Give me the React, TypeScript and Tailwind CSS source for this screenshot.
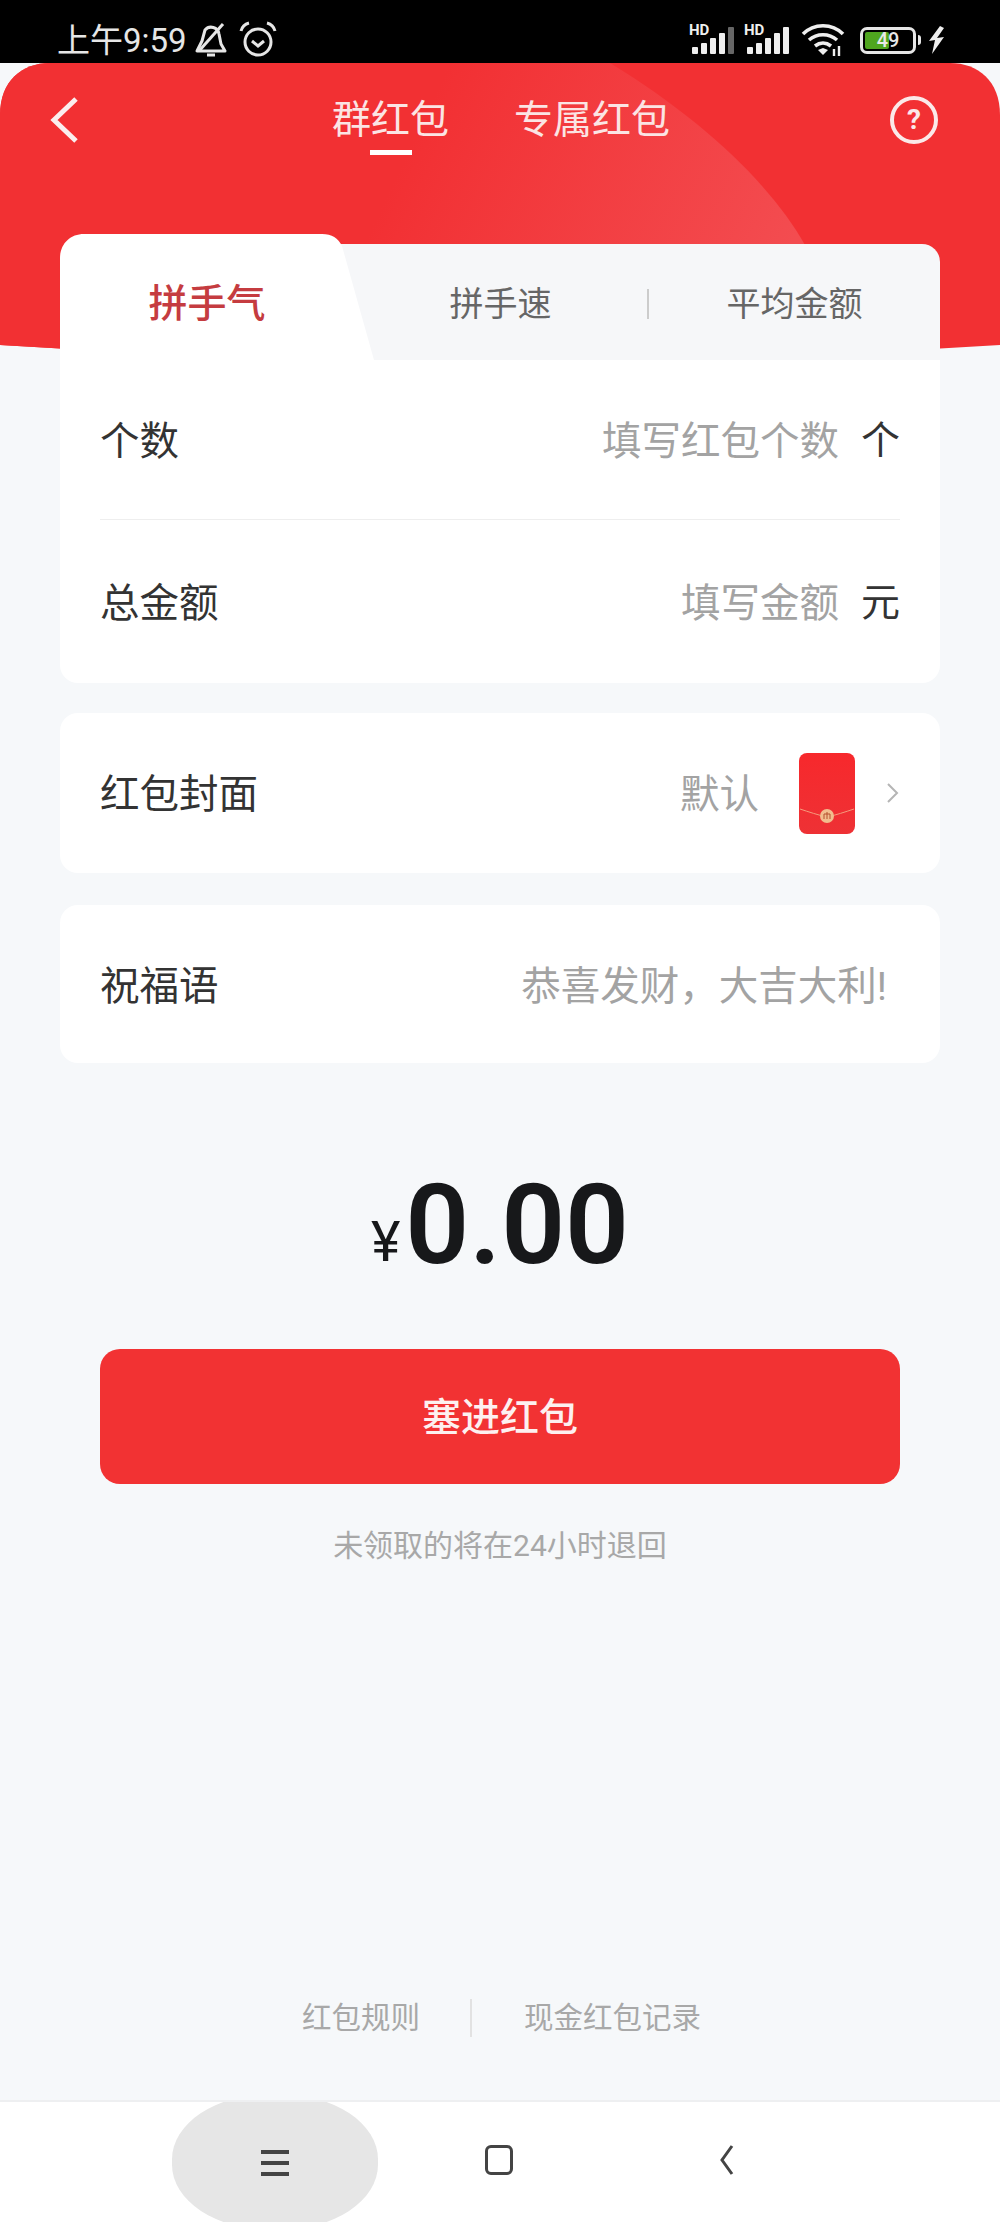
/**
 * Red packet send page
 */
const cjk = "font-['Roboto','Noto_Sans_CJK_SC',sans-serif]";

function SignalIcon({ dimLast }: { dimLast?: boolean }) {
    const bars = [
        { x: 3, h: 7 },
        { x: 12, h: 11 },
        { x: 21, h: 16 },
        { x: 30, h: 21 },
        { x: 39, h: 27 },
    ];

    return (
        <div className="relative h-[28px] w-[46px]">
            <span className="absolute left-0 top-[-3px] text-[15px] font-bold leading-[15px] text-[#eeeeee]">HD</span>
            <svg width="46" height="27" viewBox="0 0 46 27" className="absolute bottom-0 left-0">
                {bars.map((bar, index) => (
                    <rect
                        key={bar.x}
                        x={bar.x}
                        y={27 - bar.h}
                        width="6"
                        height={bar.h}
                        rx="1"
                        fill={dimLast && index === 4 ? '#666666' : '#eeeeee'}
                    />
                ))}
            </svg>
        </div>
    );
}

function StatusBar() {
    return (
        <div className="flex h-[63px] items-center justify-between bg-black pl-[57px] pr-[55px] pt-[17px] text-[#eeeeee]">
            <div className="flex items-center">
                <span className="text-[33px] leading-none text-[#e6e6e6]">上午9:59</span>
                <svg width="34" height="36" viewBox="0 0 34 36" fill="none" stroke="#e6e6e6" strokeWidth="3" className="ml-[7px]">
                    <path d="M3 29h28l-4-7-2-10a8 8 0 0 0-14-4l-3 11z" strokeLinejoin="round" />
                    <path d="M5 29 29 2" />
                    <path d="M13 33h8" strokeWidth="3" />
                </svg>
                <svg width="38" height="38" viewBox="0 0 38 38" fill="none" stroke="#e6e6e6" strokeWidth="3" className="ml-[11px]">
                    <circle cx="19" cy="21" r="13" />
                    <path d="M13 20l6 5 6-5" />
                    <path d="M2 10c1-4 4-7 8-8M36 10c-1-4-4-7-8-8" />
                </svg>
            </div>
            <div className="flex items-center">
                <SignalIcon dimLast />
                <div className="ml-[9px]">
                    <SignalIcon />
                </div>
                <svg width="44" height="34" viewBox="0 0 44 34" fill="none" stroke="#eeeeee" strokeWidth="3.6" className="ml-[11px]">
                    <path d="M2 11c11-11 29-11 40 0" />
                    <path d="M8 17c8-7 20-7 28 0" />
                    <path d="M14 23c5-4 11-4 16 0" />
                    <path d="M17 27l5 5 5-5-5-2z" fill="#eeeeee" stroke="none" />
                    <path d="M33 33v-7M38 33v-10" strokeWidth="2.4" />
                </svg>
                <div className="ml-[15px] flex items-center">
                    <div className="relative flex h-[27px] w-[56px] items-center justify-center overflow-hidden rounded-[7px] border-[3px] border-[#e6e6e6]">
                        <div className="absolute bottom-[2px] left-[2px] top-[2px] w-[24px] rounded-[2px] bg-[#4fa51f]" />
                        <span className="relative text-[20px] font-medium leading-none text-[#e8e8e8]">49</span>
                    </div>
                    <div className="ml-[2px] h-[10px] w-[3px] rounded-r-full bg-[#e6e6e6]" />
                </div>
                <svg width="17" height="28" viewBox="0 0 17 28" fill="#eeeeee" className="ml-[7px]">
                    <path d="M12 0 1 15l6-1-3 14 12-17-7 1 7-10z" />
                </svg>
            </div>
        </div>
    );
}

function RedBackdrop() {
    return (
        <svg width="1000" height="300" viewBox="0 0 1000 300" className="absolute left-0 top-0">
            <defs>
                <linearGradient id="redGlow" gradientUnits="userSpaceOnUse" x1="440" y1="20" x2="790" y2="185">
                    <stop offset="0" stopColor="#f23033" />
                    <stop offset="1" stopColor="#f34c50" />
                </linearGradient>
                <clipPath id="headerShape">
                    <path d="M0 52C0 18 22 0 50 0H950C978 0 1000 18 1000 52V282C830 292 660 300 500 300S170 292 0 282Z" />
                </clipPath>
            </defs>
            <g clipPath="url(#headerShape)">
                <rect width="1000" height="300" fill="#f23033" />
                <path d="M0 0H610C700 55 770 120 805 182V300H0Z" fill="url(#redGlow)" />
            </g>
        </svg>
    );
}

function TopNav() {
    return (
        <div className="relative flex h-[110px] items-start justify-between pl-[50px] pr-[62px] pt-[33px]">
            <svg width="30" height="46" viewBox="0 0 30 46" fill="none" stroke="#fbeeee" strokeWidth="5" className="mt-[1px]">
                <path d="M26 2 4 23l22 21" />
            </svg>
            <div className="absolute left-[332px] top-[34px] flex gap-[65px] text-[39px] leading-[46px] text-[#fbe4e4]">
                <div className="flex flex-col items-center">
                    <span>群红包</span>
                    <div className="mt-[7px] h-[5px] w-[42px] bg-white" />
                </div>
                <span>专属红包</span>
            </div>
            <div className="flex h-[48px] w-[48px] items-center justify-center rounded-full border-[4px] border-[#fbe9e9] text-[28px] font-bold leading-none text-[#fbe9e9]">
                ?
            </div>
        </div>
    );
}

function Tabs() {
    return (
        <div className="relative mt-[71px] h-[116px] rounded-t-[18px] bg-[#f6f7f9] text-[34px] text-[#666666]">
            <svg width="320" height="126" viewBox="0 0 320 126" className="absolute bottom-0 left-0">
                <path d="M0 126V24C0 10 10 0 24 0H262C272 0 278 4 282 12L314 126Z" fill="white" />
            </svg>
            <div className="relative flex h-full items-center pt-[4px]">
                <div className="flex w-[294px] justify-center text-[39px] font-medium text-[#c53c40]">拼手气</div>
                <div className="flex w-[293px] justify-center">拼手速</div>
                <div className="h-[30px] w-[2px] bg-[#cccccc]" />
                <div className="flex flex-1 justify-center">平均金额</div>
            </div>
        </div>
    );
}

interface FormRowProps {
    label: string;
    placeholder: string;
    unit: string;
}

function FormRow({ label, placeholder, unit }: FormRowProps) {
    return (
        <div className="flex h-full items-center justify-between pt-[4px]">
            <span className="text-[39.5px] text-[#333333]">{label}</span>
            <div className="flex items-center">
                <span className="text-[39.5px] text-[#a3a3a3]">{placeholder}</span>
                <span className="ml-[22px] text-[39px] text-[#333333]">{unit}</span>
            </div>
        </div>
    );
}

function EnvelopeThumb() {
    return (
        <div className="relative h-[81px] w-[56px] overflow-hidden rounded-[8px] bg-gradient-to-b from-[#f7282c] to-[#ee3135]">
            <svg width="56" height="81" viewBox="0 0 56 81" fill="none" className="absolute inset-0">
                <path d="M1 56c9 3 18 6 27 8 9-2 18-5 27-8" stroke="#f59a7c" strokeWidth="1" />
                <circle cx="28" cy="63" r="7" fill="#f2bd8e" />
                <path d="M25 66v-5h6v5M28 59v7" stroke="#b5512f" strokeWidth="1" />
            </svg>
        </div>
    );
}

function Card({ height, children }: { height: string; children: React.ReactNode }) {
    return <div className={`rounded-[18px] bg-white px-[40px] ${height}`}>{children}</div>;
}

function BottomNav() {
    return (
        <div className="flex h-[122px] overflow-hidden border-t-2 border-[#eeeff1] bg-white pl-[172px]">
            <div className="mt-[-8px] flex h-[136px] w-[206px] shrink-0 flex-col items-center justify-center gap-[7px] rounded-[48%] bg-[#e6e6e6] pt-[2px]">
                <div className="h-[4px] w-[28px] bg-[#444444]" />
                <div className="h-[4px] w-[28px] bg-[#444444]" />
                <div className="h-[4px] w-[28px] bg-[#444444]" />
            </div>
            <div className="ml-[18px] flex h-[116px] w-[206px] items-center justify-center">
                <div className="h-[30px] w-[28px] rounded-[6px] border-[3px] border-[#444444]" />
            </div>
            <div className="ml-[22px] flex h-[116px] w-[206px] items-center justify-center">
                <svg width="14" height="32" viewBox="0 0 14 32" fill="none" stroke="#444444" strokeWidth="3">
                    <path d="M12 2 2 16l10 14" />
                </svg>
            </div>
        </div>
    );
}

export default function App() {
    return (
        <div className={`flex h-[2222px] w-[1000px] flex-col overflow-hidden bg-[#f6f8fa] ${cjk}`}>
            <StatusBar />

            <div className="relative flex-1">
                <RedBackdrop />
                <TopNav />

                <div className="relative px-[60px]">
                    <Tabs />

                    <div className="rounded-b-[18px] bg-white px-[40px]">
                        <div className="h-[160px] border-b border-[#eeeeee]">
                            <FormRow label="个数" placeholder="填写红包个数" unit="个" />
                        </div>
                        <div className="h-[163px]">
                            <FormRow label="总金额" placeholder="填写金额" unit="元" />
                        </div>
                    </div>

                    <div className="mt-[30px]">
                        <Card height="h-[160px]">
                            <div className="flex h-full items-center justify-between">
                                <span className="pt-[4px] text-[39.5px] text-[#333333]">红包封面</span>
                                <div className="flex items-center">
                                    <span className="pt-[4px] text-[39.5px] text-[#a3a3a3]">默认</span>
                                    <div className="ml-[40px]">
                                        <EnvelopeThumb />
                                    </div>
                                    <svg width="14" height="22" viewBox="0 0 14 22" fill="none" stroke="#b5b5b5" strokeWidth="2" className="ml-[31px]">
                                        <path d="M2 2l9 9-9 9" />
                                    </svg>
                                </div>
                            </div>
                        </Card>
                    </div>

                    <div className="mt-[32px]">
                        <Card height="h-[158px]">
                            <div className="flex h-full items-center justify-between pr-[13px] pt-[5px]">
                                <span className="text-[39.5px] text-[#333333]">祝福语</span>
                                <span className="text-[39.5px] text-[#a3a3a3]">恭喜发财，大吉大利!</span>
                            </div>
                        </Card>
                    </div>

                    <div className="mt-[92px] flex h-[140px] items-center justify-center text-[#17181a]">
                        <span className="mt-[33px] text-[56px] leading-none">¥</span>
                        <span className="ml-[5px] text-[112px] font-semibold leading-none">0.00</span>
                    </div>

                    <div className="mx-[40px] mt-[54px] flex h-[135px] items-center justify-center rounded-[20px] bg-[#f23233] pt-[3px] text-[39px] font-medium text-[#fdf0f0]">
                        塞进红包
                    </div>

                    <p className="mt-[42px] text-center text-[30px] leading-[40px] text-[#a8a8a8]">未领取的将在24小时退回</p>
                </div>

                <div className="absolute bottom-[60px] left-[302px] flex items-center text-[29.5px] text-[#a8a8a8]">
                    <span>红包规则</span>
                    <div className="ml-[50px] mr-[52px] h-[38px] w-[2px] bg-[#e2e2e2]" />
                    <span>现金红包记录</span>
                </div>
            </div>

            <BottomNav />
        </div>
    );
}
